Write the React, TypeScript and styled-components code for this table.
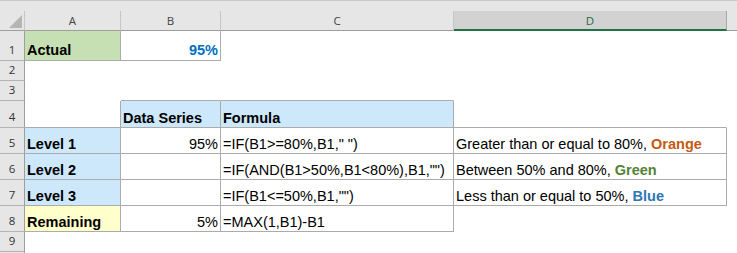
import styled, { createGlobalStyle } from "styled-components";

const GlobalStyle = createGlobalStyle`
    html, body {
        margin: 0;
        padding: 0;
        background: #ffffff;
        overflow: hidden;
    }
    body {
        width: 737px;
        height: 253px;
    }
`

const GRID = "#ababab";
const HEAD_BG = "#e6e6e6";

const Page = styled.div`
    width: 737px;
    height: 253px;
    overflow: hidden;
    background: #ffffff;
`

const TopStrip = styled.div`
    height: 10px;
    background: ${HEAD_BG};
    border-top: 1px solid #c8c8c8;
`

const Sheet = styled.div`
    display: grid;
    grid-template-columns: 25px 96px 100px 233px 273px 1fr;
    grid-template-rows: 20px 30px 20px 20px 27px 26px 26px 26px 26px 20px 20px;
`

const Corner = styled.div`
    position: relative;
    background: ${HEAD_BG};
    border-right: 1px solid #c6c6c6;
    border-bottom: 1px solid #9e9e9e;
    box-sizing: border-box;
`

const CornerMark = styled.svg`
    position: absolute;
    right: 2px;
    bottom: 2px;
`

const ColHead = styled.div<{ $selected?: boolean; $last?: boolean }>`
    display: flex;
    align-items: center;
    justify-content: center;
    box-sizing: border-box;
    background: ${(p) => (p.$selected ? "#d2d2d2" : HEAD_BG)};
    border-right: ${(p) => (p.$last ? "none" : `1px solid ${p.$selected ? "#a8a8a8" : "#c6c6c6"}`)};
    border-bottom: ${(p) => (p.$selected ? "2px solid #217346" : "1px solid #9e9e9e")};
    color: ${(p) => (p.$selected ? "#1f6b41" : "#444444")};
    font-family: "Open Sans", "Noto Sans", sans-serif;
    font-size: 11.5px;
    padding-top: ${(p) => (p.$selected ? "1px" : "0")};
`

const RowHead = styled.div`
    display: flex;
    align-items: flex-end;
    justify-content: center;
    box-sizing: border-box;
    background: ${HEAD_BG};
    border-right: 1px solid #9e9e9e;
    border-bottom: 1px solid #b4b4b4;
    color: #333333;
    font-family: "Open Sans", "Noto Sans", sans-serif;
    font-size: 11.5px;
    line-height: 15px;
    padding-bottom: 3px;
`

const Cell = styled.div<{
    $fill?: string;
    $right?: boolean;
    $edgeR?: boolean;
    $edgeB?: boolean;
    $bold?: boolean;
    $color?: string;
    $lift?: number;
}>`
    display: flex;
    align-items: flex-end;
    justify-content: ${(p) => (p.$right ? "flex-end" : "flex-start")};
    box-sizing: border-box;
    padding: 0 2px ${(p) => p.$lift || 0}px;
    background: ${(p) => p.$fill || "#ffffff"};
    border-right: 1px solid ${(p) => (p.$edgeR ? GRID : "transparent")};
    border-bottom: 1px solid ${(p) => (p.$edgeB ? GRID : "transparent")};
    font-family: "Liberation Sans", Arial, sans-serif;
    font-size: 14.5px;
    line-height: 17px;
    font-weight: ${(p) => (p.$bold ? 700 : 400)};
    color: ${(p) => p.$color || "#000000"};
    white-space: nowrap;
`

const Tag = styled.b<{ $color: string }>`
    color: ${(p) => p.$color};
`

const GREEN_FILL = "#c6e0b4";
const BLUE_FILL = "#cde8fb";
const YELLOW_FILL = "#ffffcc";

type CellData = {
    text?: React.ReactNode;
    fill?: string;
    right?: boolean;
    bold?: boolean;
    color?: string;
    boxed?: boolean;
};

type RowData = { label?: string; lift?: number; cells: CellData[] };

const blank: CellData[] = [{}, {}, {}, {}];

const rows: RowData[] = [
    {
        label: "1",
        lift: 1,
        cells: [
            { text: "Actual", bold: true, fill: GREEN_FILL, boxed: true },
            { text: "95%", bold: true, right: true, color: "#0070c0", boxed: true },
            {},
            {},
        ],
    },
    { label: "2", cells: blank },
    { label: "3", cells: blank },
    {
        label: "4",
        cells: [
            {},
            { text: "Data Series", bold: true, fill: BLUE_FILL, boxed: true },
            { text: "Formula", bold: true, fill: BLUE_FILL, boxed: true },
            {},
        ],
    },
    {
        label: "5",
        cells: [
            { text: "Level 1", bold: true, fill: BLUE_FILL, boxed: true },
            { text: "95%", right: true, boxed: true },
            { text: '=IF(B1>=80%,B1," ")', boxed: true },
            {
                text: (
                    <>
                        Greater than or equal to 80%,&nbsp;<Tag $color="#c55a11">Orange</Tag>
                    </>
                ),
                boxed: true,
            },
        ],
    },
    {
        label: "6",
        cells: [
            { text: "Level 2", bold: true, fill: BLUE_FILL, boxed: true },
            { boxed: true },
            { text: '=IF(AND(B1>50%,B1<80%),B1,"")', boxed: true },
            {
                text: (
                    <>
                        Between 50% and 80%,&nbsp;<Tag $color="#548235">Green</Tag>
                    </>
                ),
                boxed: true,
            },
        ],
    },
    {
        label: "7",
        cells: [
            { text: "Level 3", bold: true, fill: BLUE_FILL, boxed: true },
            { boxed: true },
            { text: '=IF(B1<=50%,B1,"")', boxed: true },
            {
                text: (
                    <>
                        Less than or equal to 50%,&nbsp;<Tag $color="#2e75b6">Blue</Tag>
                    </>
                ),
                boxed: true,
            },
        ],
    },
    {
        label: "8",
        cells: [
            { text: "Remaining", bold: true, fill: YELLOW_FILL, boxed: true },
            { text: "5%", right: true, boxed: true },
            { text: "=MAX(1,B1)-B1", boxed: true },
            {},
        ],
    },
    { label: "9", cells: blank },
    // row 10 only peeks in below the fold, its number stays out of view
    { cells: blank },
];

const isBoxed = (r: number, c: number) => !!rows[r]?.cells[c]?.boxed;

function App() {
    return (
        <>
            <GlobalStyle />
            <Page>
                <TopStrip />
                <Sheet>
                    <Corner>
                        <CornerMark width="13" height="13" viewBox="0 0 13 13">
                            <polygon points="13,0 13,13 0,13" fill="#b5b5b5" />
                        </CornerMark>
                    </Corner>
                    <ColHead>A</ColHead>
                    <ColHead>B</ColHead>
                    <ColHead>C</ColHead>
                    <ColHead $selected>D</ColHead>
                    <ColHead $last />

                    {rows.map((row, r) => (
                        <>
                            <RowHead key={`h${r}`}>{row.label}</RowHead>
                            {row.cells.map((cell, c) => (
                                <Cell
                                    key={`c${r}-${c}`}
                                    $fill={cell.fill}
                                    $right={cell.right}
                                    $bold={cell.bold}
                                    $color={cell.color}
                                    $lift={row.lift}
                                    $edgeR={isBoxed(r, c) || isBoxed(r, c + 1)}
                                    $edgeB={isBoxed(r, c) || isBoxed(r + 1, c)}
                                >
                                    {cell.text}
                                </Cell>
                            ))}
                            <Cell key={`f${r}`} />
                        </>
                    ))}
                </Sheet>
            </Page>
        </>
    );
}

export default App;
